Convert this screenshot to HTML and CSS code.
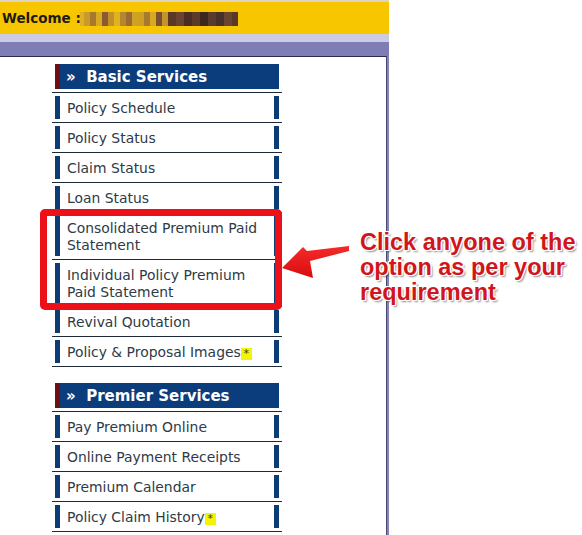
FILE: index.html
```html
<!DOCTYPE html>
<html>
<head>
<meta charset="utf-8">
<link rel="stylesheet" href="styles.css">
</head>
<body>
<div class="screen">
  <div class="page">
    <div class="topline"></div>
    <div class="welcome">Welcome :<span class="blurname"></span></div>
    <div class="lav"></div>
    <div class="purple"></div>
    <div class="panel-wrap">
      <div class="panel">
        <div class="menu">
          <div class="menu-head"><div class="head-box">»&nbsp; Basic Services</div></div>
          <div class="item"><div class="bar">Policy Schedule</div></div>
          <div class="item"><div class="bar">Policy Status</div></div>
          <div class="item"><div class="bar">Claim Status</div></div>
          <div class="item"><div class="bar">Loan Status</div></div>
          <div class="item"><div class="bar">Consolidated Premium Paid Statement</div></div>
          <div class="item"><div class="bar">Individual Policy Premium Paid Statement</div></div>
          <div class="item"><div class="bar">Revival Quotation</div></div>
          <div class="item"><div class="bar">Policy &amp; Proposal Images<span class="star">*</span></div></div>
        </div>
        <div class="menu second">
          <div class="menu-head"><div class="head-box">»&nbsp; Premier Services</div></div>
          <div class="item"><div class="bar">Pay Premium Online</div></div>
          <div class="item"><div class="bar">Online Payment Receipts</div></div>
          <div class="item"><div class="bar">Premium Calendar</div></div>
          <div class="item"><div class="bar">Policy Claim History<span class="star">*</span></div></div>
        </div>
      </div>
    </div>
  </div>
  <div class="redbox"></div>
  <svg class="arrow" width="75" height="45" viewBox="0 0 75 45">
    <defs>
      <linearGradient id="ag" x1="0" y1="0" x2="0" y2="1">
        <stop offset="0" stop-color="#f52a2a"/>
        <stop offset="1" stop-color="#d80c0c"/>
      </linearGradient>
    </defs>
    <polygon points="2,28 23,7 27,11 69,6 69,11 30,21 33,38" fill="url(#ag)"/>
  </svg>
  <div class="callout">Click anyone of the<br>option as per your<br>requirement</div>
</div>
</body>
</html>
```
FILE: styles.css
```css
html, body {
  margin: 0;
  padding: 0;
  background: #ffffff;
}
.screen {
  position: relative;
  width: 582px;
  height: 535px;
  overflow: hidden;
  font-family: "DejaVu Sans", Verdana, sans-serif;
}
.page {
  width: 389px;
}
.topline {
  height: 2px;
  background: #dcd5c6;
}
.welcome {
  height: 32px;
  background: #f8c600;
  display: flex;
  align-items: center;
  padding-left: 2px;
  font-weight: bold;
  font-size: 13.5px;
  color: #1e1a10;
}
.blurname {
  display: inline-block;
  width: 158px;
  height: 14px;
  margin-top: 2px;
  margin-left: -1px;
  background: linear-gradient(90deg,
    #e0b020 0 4px, #c89a2a 4px 10px, #a8782e 10px 16px, #d8aa22 16px 22px,
    #8a5a30 22px 28px, #c0902a 28px 34px, #e2b21c 34px 40px, #b48630 40px 46px,
    #9a6a30 46px 52px, #d0a224 52px 58px, #cf9f24 58px 64px, #a87a2e 64px 70px,
    #d8a820 70px 76px, #7a5030 76px 82px, #c49428 82px 88px, #5a3828 88px 96px,
    #6a4230 96px 104px, #4a2c24 104px 112px, #5c3a2a 112px 120px, #3e2620 120px 128px,
    #5a3a2c 128px 136px, #48302a 136px 144px, #6a4430 144px 152px, #5a3828 152px 158px);
}
.lav {
  height: 8px;
  background: #cbcbe5;
}
.purple {
  height: 14px;
  background: #7e7eb4;
}
.panel-wrap {
  background: #8383b8;
  padding-right: 2px;
}
.panel {
  background: #ffffff;
  border-top: 1px solid #2c2c4c;
  border-right: 1px solid #4a4a6e;
  min-height: 471px;
  padding: 7px 0 0 52px;
}
.menu {
  width: 230px;
}
.menu.second {
  margin-top: 16px;
}
.menu-head {
  padding: 0 3px 3px;
  border-bottom: 1px solid #1e2a38;
}
.head-box {
  height: 25px;
  background: #0b3c7c;
  border-left: 5px solid #6e0f14;
  color: #ffffff;
  font-weight: bold;
  font-size: 15px;
  line-height: 27px;
  padding-left: 6px;
}
.item {
  padding: 3px 3px;
  border-bottom: 1px solid #1e2a38;
}
.bar {
  border-left: 5px solid #0b3d74;
  border-right: 5px solid #0b3d74;
  padding: 4px 14px 2px 7px;
  font-size: 13.9px;
  line-height: 17px;
  color: #2e3a46;
}
.star {
  display: inline-block;
  background: #f4f400;
  font-size: 11px;
  line-height: 12px;
  width: 11px;
  height: 12px;
  text-align: center;
  color: #3a3a20;
}
.redbox {
  position: absolute;
  left: 40px;
  top: 209px;
  width: 242px;
  height: 101px;
  box-sizing: border-box;
  border: 7px solid #ec1018;
  border-radius: 5px;
}
.arrow {
  position: absolute;
  left: 280px;
  top: 240px;
}
.callout {
  position: absolute;
  left: 360px;
  top: 230px;
  font-family: "Liberation Sans", Arial, sans-serif;
  font-weight: bold;
  font-size: 23.5px;
  line-height: 25px;
  color: #d0161c;
  white-space: nowrap;
  text-shadow:
    -1px -1px 0 #fff, 1px -1px 0 #fff, -1px 1px 0 #fff, 1px 1px 0 #fff,
    0 -1px 0 #fff, 0 1px 0 #fff, -1px 0 0 #fff, 1px 0 0 #fff,
    2px 2px 2px rgba(0,0,0,0.45);
}
```
